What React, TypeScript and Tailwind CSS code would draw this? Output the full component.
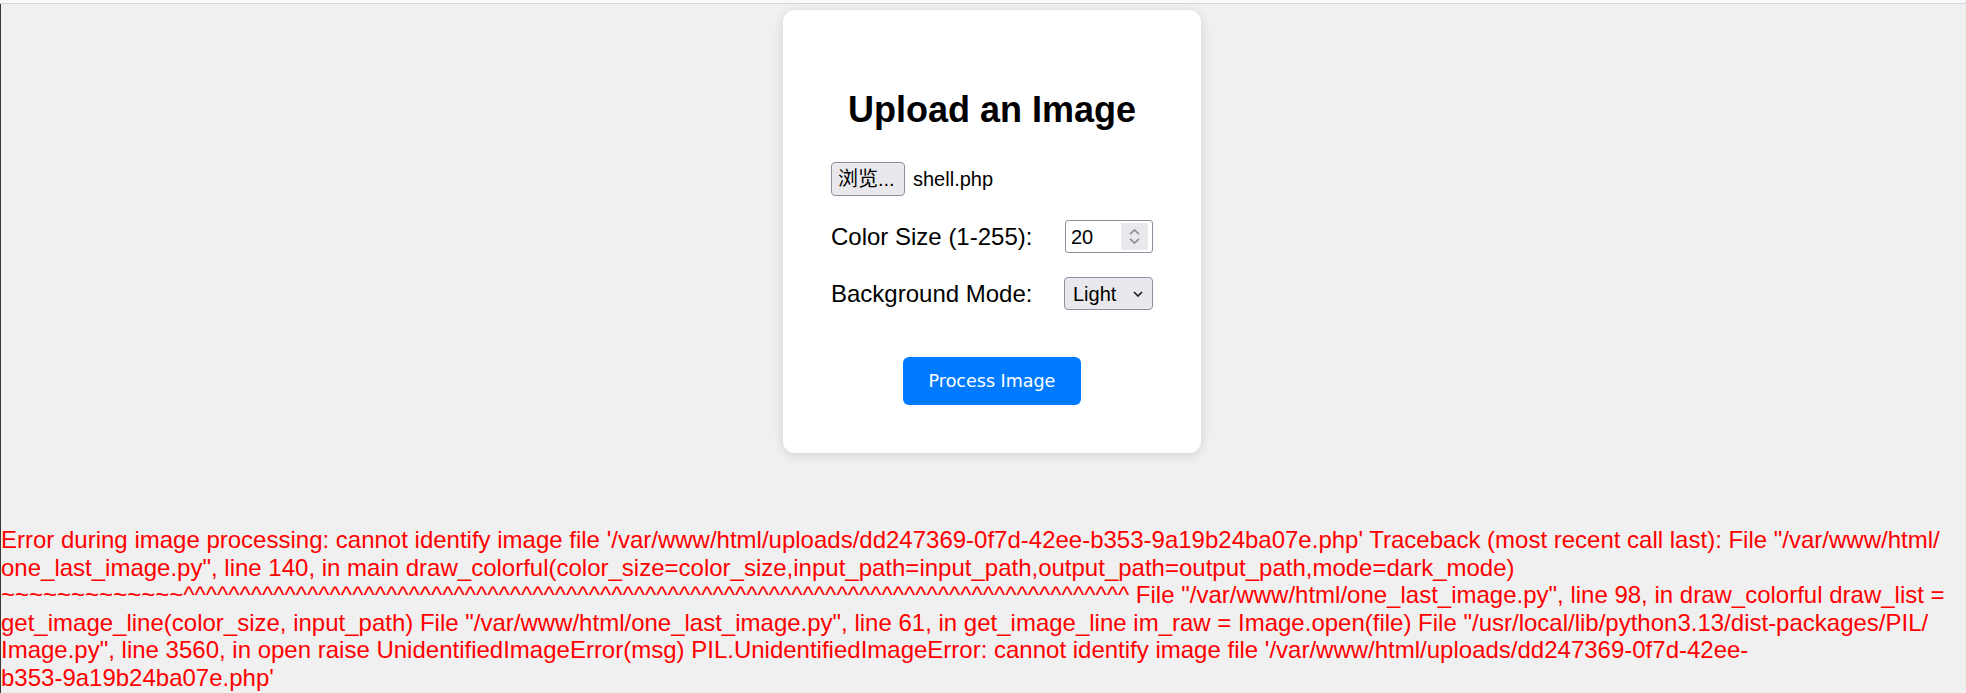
import React from "react";

const tildes = "~".repeat(13);
const carets = "^".repeat(84);

export default function App() {
  return (
    <div className="w-[1966px] min-h-[693px] bg-[#f0f0f0] font-['Liberation_Sans','Noto_Sans_CJK_SC',sans-serif] text-black overflow-hidden">
      <div className="h-[4px] bg-[#f9f9fb] border-b border-[#d4d4d8]" />
      <div className="min-h-[689px] border-l border-[#3a3a3a] flex flex-col">
        <div className="flex justify-center pl-[17px] mt-[6px]">
          <div className="w-[418px] bg-white rounded-[12px] shadow-[0_2px_12px_rgba(0,0,0,0.12)] pt-[79px] pb-[48px] px-[48px] flex flex-col">
            <h2 className="text-center text-[36px] leading-[41px] font-bold">Upload an Image</h2>
            <div className="mt-[32px] flex items-center h-[34px]">
              <div className="w-[74px] h-[34px] bg-[#e9e9ed] border border-[#8f8f9d] rounded-[4px] flex items-center pl-[6px] text-[20px] leading-none">
                浏览...
              </div>
              <span className="ml-[8px] text-[20px]">shell.php</span>
            </div>
            <div className="mt-[24px] flex items-center h-[33px]">
              <span className="w-[234px] text-[24px] leading-none">Color Size (1-255):</span>
              <div className="w-[88px] h-[33px] border border-[#8f8f9d] rounded-[3px] bg-white flex items-center pl-[5px] pr-[4px]">
                <span className="flex-1 text-[20px] leading-none">20</span>
                <div className="w-[27px] h-[27px] bg-[#e9e9ed] flex flex-col items-center justify-center gap-[3px]">
                  <svg width="11" height="6" viewBox="0 0 11 6">
                    <path d="M1 5.2 L5.5 1 L10 5.2" fill="none" stroke="#8a8a94" strokeWidth="1.6" />
                  </svg>
                  <svg width="11" height="6" viewBox="0 0 11 6">
                    <path d="M1 0.8 L5.5 5 L10 0.8" fill="none" stroke="#8a8a94" strokeWidth="1.6" />
                  </svg>
                </div>
              </div>
            </div>
            <div className="mt-[24px] flex items-center h-[33px]">
              <span className="w-[233px] text-[24px] leading-none">Background Mode:</span>
              <div className="w-[89px] h-[33px] border border-[#8f8f9d] rounded-[4px] bg-[#e9e9ed] flex items-center pl-[8px] pr-[9px]">
                <span className="flex-1 text-[20px] leading-none">Light</span>
                <svg width="10" height="6" viewBox="0 0 10 6">
                  <path d="M1 1 L5 5 L9 1" fill="none" stroke="#1a1a1a" strokeWidth="1.6" />
                </svg>
              </div>
            </div>
            <div className="mt-[47px] flex justify-center">
              <div className="w-[178px] h-[48px] bg-[#007bff] rounded-[6px] flex items-center justify-center text-white text-[17.5px] font-['DejaVu_Sans',sans-serif]">
                Process Image
              </div>
            </div>
          </div>
        </div>
        <div className="mt-[73px] text-[#ff0000] text-[24px] leading-[27.6px]">
          Error during image processing: cannot identify image file '/var/www/html/uploads/dd247369-0f7d-42ee-b353-9a19b24ba07e.php' Traceback (most recent call last): File "/var/www/html/
          <br />
          one_last_image.py", line 140, in main draw_colorful(color_size=color_size,input_path=input_path,output_path=output_path,mode=dark_mode)
          <br />
          {tildes + carets} File "/var/www/html/one_last_image.py", line 98, in draw_colorful draw_list =
          <br />
          get_image_line(color_size, input_path) File "/var/www/html/one_last_image.py", line 61, in get_image_line im_raw = Image.open(file) File "/usr/local/lib/python3.13/dist-packages/PIL/
          <br />
          Image.py", line 3560, in open raise UnidentifiedImageError(msg) PIL.UnidentifiedImageError: cannot identify image file '/var/www/html/uploads/dd247369-0f7d-42ee-
          <br />
          b353-9a19b24ba07e.php'
        </div>
      </div>
    </div>
  );
}
